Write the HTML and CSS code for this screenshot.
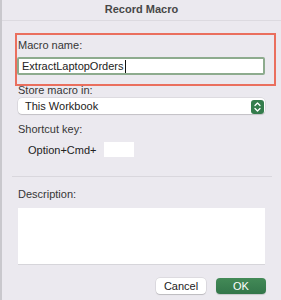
FILE: index.html
```html
<!DOCTYPE html>
<html>
    <head>
        <title>Record Macro</title>
        <link rel="stylesheet" href="styles.css">
    </head>
    <body>
        <div class="edge"></div>
        <div class="dialog">
            <div class="titleBar">Record Macro</div>
            <div class="highlight">
                <label class="label" for="macroName">Macro name:</label>
                <div class="nameField" id="macroName">ExtractLaptopOrders<span class="caret"></span></div>
            </div>
            <label class="label storeLabel">Store macro in:</label>
            <div class="select">
                <span>This Workbook</span>
                <svg class="stepper" width="13" height="14" viewBox="0 0 13 14">
                    <rect x="0" y="0" width="13" height="14" rx="3" fill="#347c4c"/>
                    <path d="M4 5.5 L6.5 3 L9 5.5" fill="none" stroke="#fff" stroke-width="1.3" stroke-linecap="round" stroke-linejoin="round"/>
                    <path d="M4 8.5 L6.5 11 L9 8.5" fill="none" stroke="#fff" stroke-width="1.3" stroke-linecap="round" stroke-linejoin="round"/>
                </svg>
            </div>
            <label class="label shortcutLabel">Shortcut key:</label>
            <div class="shortcutRow">
                <span>Option+Cmd+</span>
                <div class="keyBox"></div>
            </div>
            <div class="separator"></div>
            <label class="label descLabel">Description:</label>
            <div class="descBox"></div>
            <div class="buttons">
                <div class="btn cancel">Cancel</div>
                <div class="btn ok">OK</div>
            </div>
        </div>
    </body>
</html>
```

FILE: styles.css
```css
body {
    margin: 0;
    display: flex;
    width: 281px;
    height: 300px;
    overflow: hidden;
    font-family: "Liberation Sans", Arial, sans-serif;
    font-size: 11px;
    color: #363636;
}

.edge {
    width: 2px;
    height: 300px;
    background-color: #c9c8cd;
}

.dialog {
    width: 279px;
    height: 300px;
    background-color: #ebe9ef;
}

.titleBar {
    height: 20px;
    line-height: 19px;
    border-bottom: 1px solid #dcdae0;
    text-align: center;
    font-weight: bold;
    color: #474747;
}

.label {
    display: block;
    line-height: 13px;
    margin-left: 16px;
}

.highlight {
    width: 257px;
    margin-top: 12px;
    margin-left: 13px;
    padding: 4px 0 9px 0;
    border: 2px solid #ea6f5e;
}

.highlight .label {
    margin-left: 1px;
}

.nameField {
    display: flex;
    align-items: center;
    box-sizing: border-box;
    width: 248px;
    height: 18px;
    margin-top: 5px;
    margin-left: 0;
    padding-left: 3px;
    background-color: #fff;
    border: 2px solid #8dab8e;
    border-radius: 2px;
    color: #222;
}

.caret {
    display: inline-block;
    width: 1px;
    height: 13px;
    margin-left: 1px;
    background-color: #111;
}

.storeLabel {
    margin-top: -2px;
}

.select {
    display: flex;
    align-items: center;
    justify-content: space-between;
    box-sizing: border-box;
    width: 247px;
    height: 16px;
    margin-top: 1px;
    margin-left: 16px;
    padding-left: 7px;
    background-color: #fff;
    border-radius: 4px;
    box-shadow: 0 0 0 0.5px rgba(0, 0, 0, 0.12), 0 1px 1px rgba(0, 0, 0, 0.12);
    color: #222;
}

.stepper {
    margin-right: 1px;
    margin-top: 2px;
}

.shortcutLabel {
    margin-top: 9px;
}

.shortcutRow {
    display: flex;
    align-items: center;
    height: 15px;
    margin-top: 6px;
    margin-left: 26px;
    color: #222;
}

.keyBox {
    width: 30px;
    height: 15px;
    margin-left: 8px;
    background-color: #fff;
}

.separator {
    width: 260px;
    height: 1px;
    margin-top: 19px;
    margin-left: 10px;
    background-color: #d9d7dd;
}

.descLabel {
    margin-top: 11px;
}

.descBox {
    width: 247px;
    height: 56px;
    margin-top: 7px;
    margin-left: 16px;
    background-color: #fff;
    box-shadow: 0 1px 0 #d6d5da;
}

.buttons {
    display: flex;
    justify-content: flex-end;
    gap: 10px;
    width: 264px;
    margin-top: 14px;
}

.btn {
    width: 50px;
    height: 16px;
    line-height: 16px;
    text-align: center;
    border-radius: 4px;
    font-size: 11px;
}

.cancel {
    background-color: #fff;
    color: #222;
    box-shadow: 0 0 0 0.5px rgba(0, 0, 0, 0.12), 0 1px 1px rgba(0, 0, 0, 0.15);
}

.ok {
    background: linear-gradient(#438a57, #33764a);
    color: #fff;
    box-shadow: 0 1px 1px rgba(0, 0, 0, 0.15);
}
```
